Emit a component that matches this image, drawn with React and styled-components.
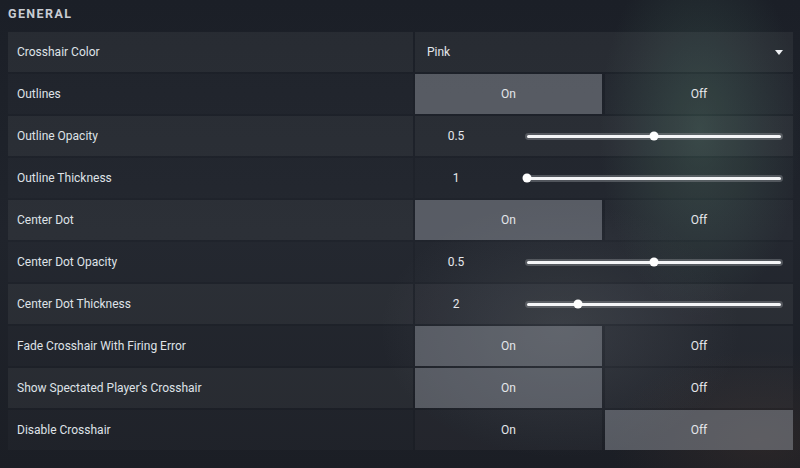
import styled, { createGlobalStyle } from 'styled-components';

const GlobalStyle = createGlobalStyle`
    html, body {
        margin: 0;
        padding: 0;
        background: #1c2028;
    }
    body {
        font-family: Roboto, "Liberation Sans", sans-serif;
    }
`;

const Page = styled.div`
    width: 800px;
    height: 468px;
    box-sizing: border-box;
    padding: 7px 7px 0 8px;
    overflow: hidden;
    background:
        radial-gradient(ellipse 140px 260px at 700px 130px, rgba(72, 108, 94, 0.4), transparent 72%),
        radial-gradient(ellipse 240px 170px at 560px 330px, rgba(120, 126, 134, 0.2), transparent 75%),
        radial-gradient(ellipse 200px 120px at 760px 440px, rgba(70, 52, 44, 0.35), transparent 75%),
        linear-gradient(180deg, #1b1f27 0%, #20242c 50%, #1b1e25 100%);
`;

const Heading = styled.h2`
    margin: 0 0 9px;
    height: 16px;
    font-size: 12.5px;
    font-weight: 700;
    letter-spacing: 1.4px;
    color: #c8ccd3;
    line-height: 14px;
`;

const List = styled.div`
    display: flex;
    flex-direction: column;
    gap: 2px;
`;

const Row = styled.div`
    display: grid;
    grid-template-columns: 405px 378px;
    column-gap: 2px;
    height: 40px;
`;

const Label = styled.div`
    display: flex;
    align-items: center;
    padding-left: 9px;
    font-size: 12px;
    color: #dfe2e7;
    background: ${props => props.shade ? 'rgba(255, 255, 255, 0.055)' : 'rgba(255, 255, 255, 0.02)'};
`;

const Control = styled.div`
    display: flex;
    align-items: center;
    background: ${props => props.shade ? 'rgba(255, 255, 255, 0.055)' : 'rgba(255, 255, 255, 0.02)'};
`;

const Select = styled(Control)`
    justify-content: space-between;
    padding: 0 10px 0 12px;
    font-size: 12px;
    color: #e2e5ea;
`;

const Caret = styled.span`
    width: 0;
    height: 0;
    border-left: 4px solid transparent;
    border-right: 4px solid transparent;
    border-top: 5px solid #eef0f3;
`;

const Toggle = styled.div`
    display: grid;
    grid-template-columns: 187px 188px;
    column-gap: 3px;
`;

const Option = styled.div`
    display: flex;
    align-items: center;
    justify-content: center;
    font-size: 12px;
    color: #e4e6ea;
    background: ${props => props.active ? 'rgba(150, 155, 162, 0.48)' : 'rgba(255, 255, 255, 0.035)'};
`;

const Value = styled.span`
    width: 82px;
    text-align: center;
    font-size: 12px;
    color: #e6e8ec;
`;

const Track = styled.div`
    position: relative;
    margin-left: 30px;
    width: 254px;
    height: 3px;
    border-radius: 3px;
    background: #f4f5f7;
    box-shadow: 0 0 0 2px rgba(120, 124, 130, 0.55);
`;

const Thumb = styled.span`
    position: absolute;
    top: 50%;
    width: 9px;
    height: 9px;
    border-radius: 50%;
    background: #ffffff;
    transform: translate(-50%, -50%);
`;

const settings = [
    { label: 'Crosshair Color', type: 'select', value: 'Pink' },
    { label: 'Outlines', type: 'toggle', on: true },
    { label: 'Outline Opacity', type: 'slider', value: '0.5', pos: 0.5 },
    { label: 'Outline Thickness', type: 'slider', value: '1', pos: 0 },
    { label: 'Center Dot', type: 'toggle', on: true },
    { label: 'Center Dot Opacity', type: 'slider', value: '0.5', pos: 0.5 },
    { label: 'Center Dot Thickness', type: 'slider', value: '2', pos: 0.2 },
    { label: 'Fade Crosshair With Firing Error', type: 'toggle', on: true },
    { label: "Show Spectated Player's Crosshair", type: 'toggle', on: true },
    { label: 'Disable Crosshair', type: 'toggle', on: false },
];

const SettingControl = ({ setting, shade }) => {
    if (setting.type === 'select') {
        return (
            <Select shade={shade}>
                <span>{setting.value}</span>
                <Caret />
            </Select>
        );
    }
    if (setting.type === 'toggle') {
        return (
            <Toggle>
                <Option active={setting.on}>On</Option>
                <Option active={!setting.on}>Off</Option>
            </Toggle>
        );
    }
    return (
        <Control shade={shade}>
            <Value>{setting.value}</Value>
            <Track>
                <Thumb style={{ left: `${setting.pos * 100}%` }} />
            </Track>
        </Control>
    );
};

const App = () => {
    return (
        <Page>
            <GlobalStyle />
            <Heading>GENERAL</Heading>
            <List>
                {settings.map((setting, index) => {
                    const shade = index % 2 === 0;
                    return (
                        <Row key={setting.label}>
                            <Label shade={shade}>{setting.label}</Label>
                            <SettingControl setting={setting} shade={shade} />
                        </Row>
                    );
                })}
            </List>
        </Page>
    );
};

export default App;
